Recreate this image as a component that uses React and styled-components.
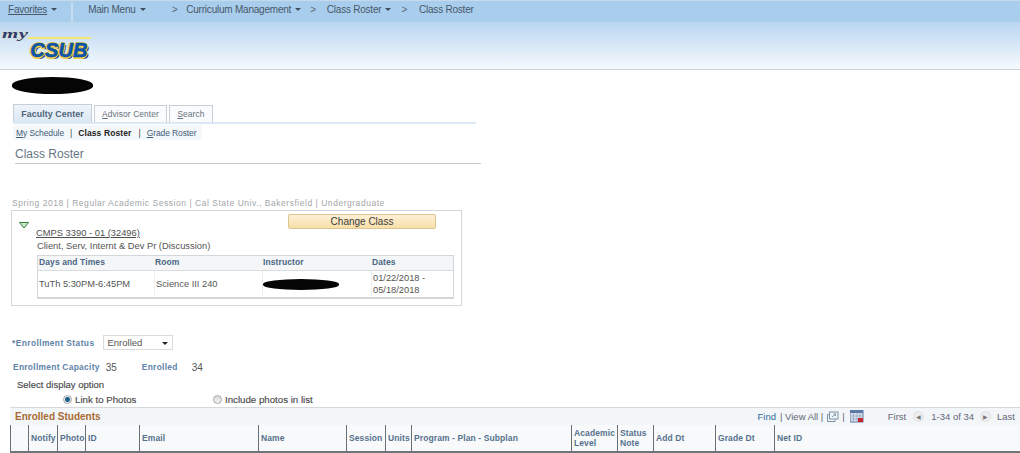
import React from 'react';
import styled, { createGlobalStyle } from 'styled-components';

const Global = createGlobalStyle`
  html, body { margin: 0; padding: 0; background: #fff; }
  body { font-family: "Liberation Sans", Arial, sans-serif; color: #4a4a4a; width: 1020px; height: 453px; overflow: hidden; }
  * { box-sizing: border-box; }
`;
const Page = styled.div`width: 1020px; height: 453px; overflow: hidden; display: flex; flex-direction: column;`;
const NavBar = styled.nav`
  height: 22px; background: #a9cdec; border-top: 1px solid #c6d9ea; display: flex; align-items: center;
  font-size: 10px; letter-spacing: -0.22px; color: #47586a; padding-bottom: 4px; flex: none;
`;
const NavItem = styled.span`
  display: inline-flex; align-items: center; gap: 4px; margin-left: ${p => p.$ml}px; white-space: nowrap;
  text-decoration: ${p => p.$u ? 'underline' : 'none'};
`;
const Caret = styled.i`
  width: 0; height: 0; border-left: 3px solid transparent; border-right: 3px solid transparent; border-top: 3px solid #3f4e5e; display: inline-block;
`;
const NavDivider = styled.span`width: 2px; height: 20px; background: #c6dcf0; margin-left: 14px; margin-top: 4px;`;
const Chevron = styled.span`margin-left: ${p => p.$ml}px; font-size: 10px; color: #56677a;`;
const Banner = styled.header`
  height: 48px; flex: none; background: linear-gradient(#bad6f1, #f6fafd); border-bottom: 1px solid #c8d0d8; position: relative;
`;
const LogoMy = styled.span`
  position: absolute; left: 2px; top: 5px; font: italic bold 13px "Liberation Serif", serif; color: #2c3a74; letter-spacing: 0.4px; line-height: 14px; text-shadow: 0 0 1px #f0d860;
  transform: scaleX(1.6); transform-origin: left center;
`;
const LogoLine = styled.span`position: absolute; left: 28px; top: 15px; width: 63px; height: 2px; background: #f4e671;`;
const LogoMark = styled.span`
  position: absolute; left: 27px; top: 18px; width: 64px; height: 21px; display: flex; align-items: center; justify-content: center;
  font: italic 900 20px "Liberation Sans", sans-serif; letter-spacing: 0.2px; color: #0b57b0;
  -webkit-text-stroke: 0.6px #0b4a9a; text-shadow: 1.5px 0 0 #f3d24a, -1.5px 0 0 #f3d24a, 0 1.5px 0 #f3d24a, 0 -1.5px 0 #f3d24a, 2px 2px 0 #1b3f80;
`;
const Content = styled.main`flex: 1; display: flex; flex-direction: column; position: relative;`;
const Redaction = styled.div`
  width: ${p => p.$w}px; height: ${p => p.$h}px; margin-left: ${p => p.$ml || 0}px; background: #050505; border-radius: 50% / 45%;
`;
const NameRow = styled.div`padding: 7px 0 0 12px; height: 35px;`;
const Tabs = styled.div`display: flex; gap: 2px; margin-left: 13px; width: 463px; height: 19px; border-bottom: 2px solid #dce8f3; align-items: flex-end;`;
const Tab = styled.div`
  height: ${p => p.$active ? 18 : 17}px; width: ${p => p.$w}px; display: flex; align-items: center; justify-content: center;
  font-size: ${p => p.$active ? '8.8px' : '8.4px'}; font-weight: ${p => p.$active ? 700 : 400}; color: ${p => p.$active ? '#4e6479' : '#68727c'};
  background: ${p => p.$active ? 'linear-gradient(#eef4fa, #dbe8f3)' : '#fafbfc'}; border: 1px solid #c7ced5; border-bottom: none; letter-spacing: 0.1px;
  & u { text-decoration: underline; }
`;
const SubTabs = styled.div`
  margin-left: 13px; width: 189px; height: 15px; margin-top: 1px; background: #f5f8fb; display: flex; align-items: center; padding-left: 3px; font-size: 8.5px; color: #3f5c78; white-space: nowrap;
`;
const SubSep = styled.span`margin: 0 6px 0 ${p => p.$l}px; color: #444;`;
const SubCurrent = styled.b`color: #222; letter-spacing: 0.1px;`;
const SubLink = styled.span`letter-spacing: -0.1px; & u { text-decoration: underline; }`;
const PageTitle = styled.h1`
  margin: 7px 0 0 15px; width: 466px; height: 17px; font-size: 12px; font-weight: 400; color: #667583; border-bottom: 1px solid #c6c9cc; line-height: 15px;
`;
const Term = styled.div`
  margin: 34px 0 0 12px; height: 11px; font-size: 8.5px; line-height: 11px; color: #a2a6a8; letter-spacing: 0.53px; white-space: nowrap;
`;
const ClassBox = styled.section`
  margin: 1px 0 0 11px; width: 451px; height: 96px; border: 1px solid #d4d8db; position: relative; padding: 16px 0 0 25px;
`;
const Disclosure = styled.svg`position: absolute; left: 7px; top: 11px;`;
const ChangeButton = styled.button`
  position: absolute; left: 276px; top: 3px; width: 148px; height: 15px; padding: 0; border: 1px solid #dcc690; border-radius: 2px; background: linear-gradient(#fdf0d6, #f8dfa9);
  font: 10px "Liberation Sans", sans-serif; color: #3c3c3c;
`;
const ClassLink = styled.div`font-size: 9.35px; line-height: 12px; color: #4f4f4f; text-decoration: underline; margin-left: -1px;`;
const ClassName = styled.div`font-size: 9.35px; line-height: 12px; color: #555; margin-top: 1px; white-space: nowrap;`;
const MeetTable = styled.div`
  margin-top: 3px; width: 417px; border: 1px solid #d4d7da; display: grid; grid-template-columns: 116px 108px 109px 1fr; border-bottom-width: 2px;
`;
const MeetHead = styled.div`
  height: 15px; background: #f4f6f8; border-bottom: 1px solid #d9dcdf; font-size: 8.5px; font-weight: 700; color: #4b6684; padding: 1px 0 0 1px; line-height: 11px; letter-spacing: 0.1px;
`;
const MeetCell = styled.div`
  height: 26px; font-size: 9.3px; color: #555; padding-left: 1px; display: flex; align-items: center; line-height: 12px;
  border-left: ${p => p.$first ? 'none' : '1px solid #eceeef'};
`;
const StatusRow = styled.div`display: flex; align-items: center; margin: 28px 0 0 12px; height: 17px;`;
const FieldLabel = styled.span`font-size: 8.4px; font-weight: 700; color: #5f83a8; letter-spacing: ${p => p.$wide ? 0.42 : 0.3}px; white-space: nowrap;`;
const SelectBox = styled.div`
  margin-left: 9px; width: 70px; height: 15px; border: 1px solid #dcdcdc; display: flex; align-items: center; justify-content: space-between; padding: 0 4px 0 3px; font-size: 9.5px; color: #555;
`;
const SelectCaret = styled.i`width: 0; height: 0; border-left: 3px solid transparent; border-right: 3px solid transparent; border-top: 3px solid #222; margin-top: 1px;`;
const CapacityRow = styled.div`display: flex; align-items: center; margin: 9px 0 0 13px; height: 14px;`;
const Value = styled.span`font-size: 10px; color: #555; margin-left: ${p => p.$ml}px;`;
const PlainLabel = styled.span`font-size: 8.4px; font-weight: 700; color: #5f83a8; letter-spacing: 0.3px; margin-left: ${p => p.$ml}px;`;
const OptionTitle = styled.div`margin: 4px 0 0 17px; font-size: 9.5px; line-height: 13px; color: #4a4a4a; -webkit-text-stroke: 0.15px #4a4a4a;`;
const RadioRow = styled.div`display: flex; height: 14px; margin-top: 1px; align-items: center; margin-left: 63px; font-size: 9.7px; color: #4a4a4a; -webkit-text-stroke: 0.15px #4a4a4a;`;
const Radio = styled.span`
  width: 9px; height: 9px; border-radius: 50%; border: 1px solid #a8a8a8; background: ${p => p.$on ? 'radial-gradient(circle, #1c5f8a 0 2px, #e6eef3 3px)' : 'linear-gradient(#d8d8d8, #f4f4f4)'}; margin-right: 3px; flex: none;
`;
const RadioLabel = styled.span`width: ${p => p.$w}px; white-space: nowrap;`;
const GridTitle = styled.div`
  margin: 1px 0 0 10px; height: 18px; flex: none; background: #f2f6f8; border-top: 1px solid #d5d9dc; display: flex; align-items: center; justify-content: space-between;
`;
const GridName = styled.div`margin-left: 5px; font-size: 10px; font-weight: 700; color: #a86a32; letter-spacing: 0;`;
const GridNav = styled.div`display: flex; align-items: center; font-size: 9.5px; color: #667; padding-right: 5px; white-space: nowrap;`;
const FindLink = styled.span`color: #2f6a9e;`;
const NavGap = styled.span`margin-left: ${p => p.$w}px; display: inline-flex; align-items: center;`;
const RoundBtn = styled.span`
  width: 11px; height: 11px; border-radius: 50%; background: #eeeeee; border: 1px solid #e0e0e0; display: inline-flex; align-items: center; justify-content: center; font-size: 6px; color: #777; line-height: 1;
`;
const HeaderRow = styled.div`
  margin-left: 10px; height: 28px; flex: none; background: #f7f9fa; border-bottom: 2px solid #6f7479; display: grid;
  grid-template-columns: 18px 29px 28px 54px 119px 88px 39px 26px 160px 46px 36px 62px 59px 1fr;
`;
const HeaderCell = styled.div`
  border-left: 1px solid #6a6f74; font-size: 8.5px; line-height: 10.5px; font-weight: 700; color: #56718e; padding: 0 0 0 2px; display: flex; align-items: center; white-space: pre-line; letter-spacing: 0.1px; overflow: hidden;
`;

const columns = ['', 'Notify', 'Photo', 'ID', 'Email', 'Name', 'Session', 'Units', 'Program - Plan - Subplan', 'Academic\nLevel', 'Status\nNote', 'Add Dt', 'Grade Dt', 'Net ID'];

function Nav() {
  return (
    <NavBar>
      <NavItem $ml={8} $u>Favorites<Caret /></NavItem>
      <NavDivider />
      <NavItem $ml={15}>Main Menu<Caret /></NavItem>
      <Chevron $ml={26}>&gt;</Chevron>
      <NavItem $ml={9}>Curriculum Management<Caret /></NavItem>
      <Chevron $ml={9}>&gt;</Chevron>
      <NavItem $ml={11}>Class Roster<Caret /></NavItem>
      <Chevron $ml={10}>&gt;</Chevron>
      <NavItem $ml={12}>Class Roster</NavItem>
    </NavBar>
  );
}

export default function App() {
  return (
    <Page>
      <Global />
      <Nav />
      <Banner>
        <LogoMy>my</LogoMy>
        <LogoLine />
        <LogoMark>CSUB</LogoMark>
      </Banner>
      <Content>
        <NameRow><Redaction $w={81} $h={17} /></NameRow>
        <Tabs>
          <Tab $active $w={79}>Faculty Center</Tab>
          <Tab $w={73}><span><u>A</u>dvisor Center</span></Tab>
          <Tab $w={44}><span><u>S</u>earch</span></Tab>
        </Tabs>
        <SubTabs>
          <SubLink><u>M</u>y Schedule</SubLink>
          <SubSep $l={6}>|</SubSep>
          <SubCurrent>Class Roster</SubCurrent>
          <SubSep $l={7}>|</SubSep>
          <SubLink><u>G</u>rade Roster</SubLink>
        </SubTabs>
        <PageTitle>Class Roster</PageTitle>
        <Term>Spring 2018 | Regular Academic Session | Cal State Univ., Bakersfield | Undergraduate</Term>
        <ClassBox>
          <Disclosure width="10" height="7" viewBox="0 0 10 7">
            <path d="M0.5 0.5H9.5L5 6Z" fill="#cfe8c8" stroke="#2f7f3e" strokeWidth="1" />
          </Disclosure>
          <ChangeButton>Change Class</ChangeButton>
          <ClassLink>CMPS 3390 - 01 (32496)</ClassLink>
          <ClassName>Client, Serv, Internt &amp; Dev Pr (Discussion)</ClassName>
          <MeetTable>
            <MeetHead>Days and Times</MeetHead>
            <MeetHead>Room</MeetHead>
            <MeetHead>Instructor</MeetHead>
            <MeetHead>Dates</MeetHead>
            <MeetCell $first>TuTh 5:30PM-6:45PM</MeetCell>
            <MeetCell>Science III 240</MeetCell>
            <MeetCell><Redaction $w={76} $h={11} $ml={-1} /></MeetCell>
            <MeetCell>01/22/2018 -<br />05/18/2018</MeetCell>
          </MeetTable>
        </ClassBox>
        <StatusRow>
          <FieldLabel $wide>*Enrollment Status</FieldLabel>
          <SelectBox>Enrolled<SelectCaret /></SelectBox>
        </StatusRow>
        <CapacityRow>
          <FieldLabel>Enrollment Capacity</FieldLabel>
          <Value $ml={6}>35</Value>
          <PlainLabel $ml={25}>Enrolled</PlainLabel>
          <Value $ml={14}>34</Value>
        </CapacityRow>
        <OptionTitle>Select display option</OptionTitle>
        <RadioRow>
          <Radio $on />
          <RadioLabel $w={138}>Link to Photos</RadioLabel>
          <Radio />
          <RadioLabel $w={110}>Include photos in list</RadioLabel>
        </RadioRow>
        <GridTitle>
          <GridName>Enrolled Students</GridName>
          <GridNav>
            <FindLink>Find</FindLink>
            <NavGap $w={4}>| View All |</NavGap>
            <NavGap $w={3}>
              <svg width="13" height="12" viewBox="0 0 13 12" fill="none" stroke="#7f93a8" strokeWidth="1">
                <path d="M3 3.5H1.5V10.5H9V8.5" />
                <rect x="3.5" y="1" width="8.5" height="7" fill="#eef3f7" />
                <path d="M6 6L9.5 3M7.5 3H9.5V5" />
              </svg>
            </NavGap>
            <NavGap $w={3}>|</NavGap>
            <NavGap $w={5}>
              <svg width="14" height="13" viewBox="0 0 14 13">
                <rect x="0" y="0" width="13" height="12" fill="#d6dfea" stroke="#5d79a6" />
                <rect x="0" y="0" width="13" height="3" fill="#5d79a6" />
                <path d="M3.5 3V12M7 3V12M10 3V12M0 6H13M0 9H13" stroke="#8fa3c1" strokeWidth="0.7" />
                <rect x="8" y="8" width="5" height="4" fill="#c8242c" />
              </svg>
            </NavGap>
            <NavGap $w={24}>First</NavGap>
            <NavGap $w={7}><RoundBtn>◀</RoundBtn></NavGap>
            <NavGap $w={7}>1-34 of 34</NavGap>
            <NavGap $w={6}><RoundBtn>▶</RoundBtn></NavGap>
            <NavGap $w={6}>Last</NavGap>
          </GridNav>
        </GridTitle>
        <HeaderRow>
          {columns.map((c, i) => <HeaderCell key={i}>{c}</HeaderCell>)}
        </HeaderRow>
      </Content>
    </Page>
  );
}
